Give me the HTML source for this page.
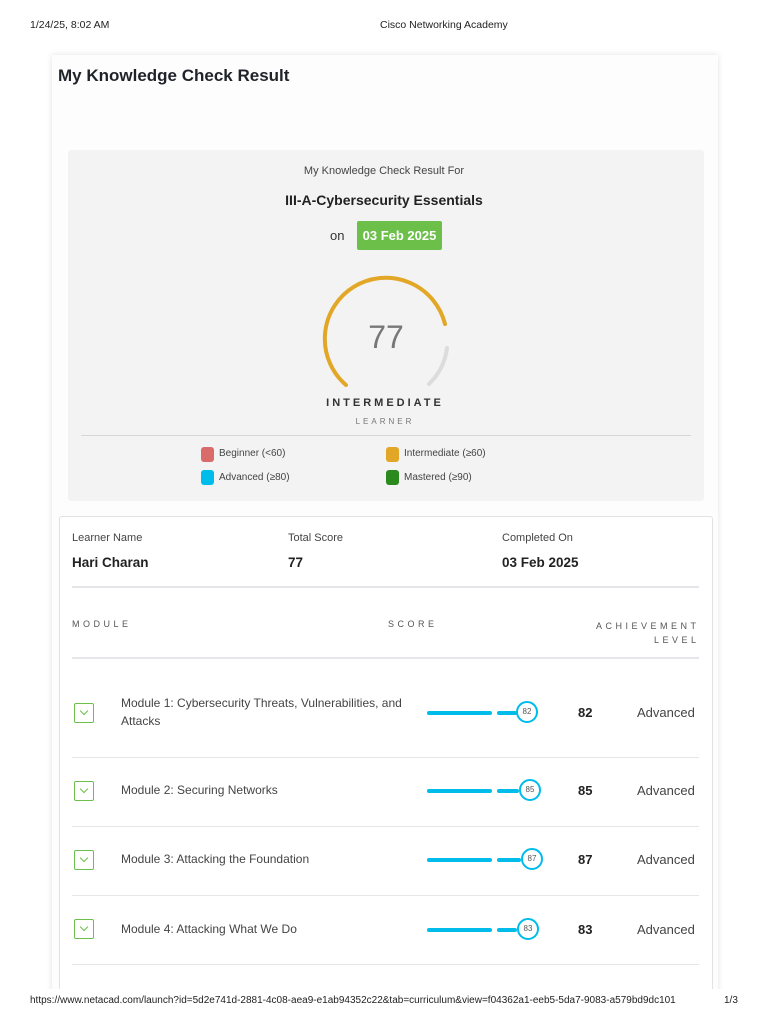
<!DOCTYPE html>
<html><head><style>
*{margin:0;padding:0;box-sizing:border-box}
body{width:768px;height:1024px;background:#fff;font-family:"Liberation Sans",sans-serif;position:relative;overflow:hidden;color:#222}
.a{position:absolute;white-space:nowrap}
.chk{position:absolute;left:74px;width:20px;height:20px;border:1.5px solid #6cc04a;border-radius:2px}
.chk:after{content:"";position:absolute;left:6px;top:4px;width:5px;height:5px;border-right:1.5px solid #6cc04a;border-bottom:1.5px solid #6cc04a;transform:rotate(45deg)}
.mt{font-size:12px;color:#444;line-height:18px}
.bar{position:absolute;height:4px;background:#00bceb;border-radius:2px}
.cir{position:absolute;width:22px;height:22px;border:2px solid #00bceb;border-radius:50%;font-size:8px;color:#555;text-align:center;line-height:18px;background:#fff}
.sc{font-size:13px;font-weight:bold;color:#222}
.lv{font-size:13px;color:#444}
.sep{position:absolute;left:72px;width:627px;height:1px;background:#e4e6ea}
</style></head><body>
<div class="a" style="left:30px;top:19px;font-size:10.5px">1/24/25, 8:02 AM</div>
<div class="a" style="left:380px;top:19px;font-size:10.5px">Cisco Networking Academy</div>

<div style="position:absolute;left:52px;top:55px;width:666px;height:940px;background:#fdfdfd;box-shadow:0 0 6px rgba(0,0,0,.12)"></div>
<div class="a" style="left:58px;top:66px;font-size:17px;font-weight:bold;color:#1f2329">My Knowledge Check Result</div>

<div style="position:absolute;left:68px;top:150px;width:636px;height:351px;background:#f3f3f3;border-radius:3px"></div>
<div class="a" style="left:0;width:768px;text-align:center;top:165px;font-size:11px;color:#444">My Knowledge Check Result For</div>
<div class="a" style="left:0;width:768px;text-align:center;top:192px;font-size:14px;font-weight:bold;color:#222">III-A-Cybersecurity Essentials</div>
<div class="a" style="left:330px;top:228px;font-size:13px;color:#333">on</div>
<div class="a" style="left:357px;top:221px;width:85px;height:29px;background:#6cc04a;border-radius:2px;color:#fff;font-size:13px;font-weight:bold;text-align:center;line-height:29px">03 Feb 2025</div>
<svg style="position:absolute;left:0;top:0" width="768" height="1024">
<path d="M346 385 A61 61 0 1 1 445 324" fill="none" stroke="#e2a727" stroke-width="4" stroke-linecap="round"/>
<path d="M447 348 A61 61 0 0 1 429 384" fill="none" stroke="#dcdcdc" stroke-width="4" stroke-linecap="round"/>
</svg>
<div class="a" style="left:0;width:772px;text-align:center;top:319px;font-size:32px;color:#777">77</div>
<div class="a" style="left:0;width:770px;text-align:center;top:397px;font-size:11px;font-weight:bold;letter-spacing:3px;color:#333">INTERMEDIATE</div>
<div class="a" style="left:0;width:770px;text-align:center;top:417px;font-size:8px;letter-spacing:3px;color:#777">LEARNER</div>
<div style="position:absolute;left:81px;top:435px;width:610px;height:1px;background:#d6d6d6"></div>
<div style="position:absolute;left:201px;top:447px;width:13px;height:15px;border-radius:3px;background:#da6b6b"></div>
<div class="a" style="left:219px;top:448px;font-size:10px;color:#444">Beginner (&lt;60)</div>
<div style="position:absolute;left:386px;top:447px;width:13px;height:15px;border-radius:3px;background:#e2a727"></div>
<div class="a" style="left:404px;top:448px;font-size:10px;color:#444">Intermediate (≥60)</div>
<div style="position:absolute;left:201px;top:470px;width:13px;height:15px;border-radius:3px;background:#00bceb"></div>
<div class="a" style="left:219px;top:472px;font-size:10px;color:#444">Advanced (≥80)</div>
<div style="position:absolute;left:386px;top:470px;width:13px;height:15px;border-radius:3px;background:#2b8a1e"></div>
<div class="a" style="left:404px;top:472px;font-size:10px;color:#444">Mastered (≥90)</div>

<div style="position:absolute;left:59px;top:516px;width:654px;height:480px;background:#fff;border:1px solid #e2e2e2;border-radius:3px"></div>
<div class="a" style="left:72px;top:532px;font-size:11px;color:#444">Learner Name</div>
<div class="a" style="left:288px;top:532px;font-size:11px;color:#444">Total Score</div>
<div class="a" style="left:502px;top:532px;font-size:11px;color:#444">Completed On</div>
<div class="a" style="left:72px;top:555px;font-size:13.5px;font-weight:bold">Hari Charan</div>
<div class="a" style="left:288px;top:555px;font-size:13.5px;font-weight:bold">77</div>
<div class="a" style="left:502px;top:555px;font-size:13.5px;font-weight:bold">03 Feb 2025</div>
<div class="sep" style="top:586px;height:2px"></div>
<div class="a" style="left:72px;top:619px;font-size:9px;letter-spacing:3.5px;color:#555">MODULE</div>
<div class="a" style="left:388px;top:619px;font-size:9px;letter-spacing:3.5px;color:#555">SCORE</div>
<div class="a" style="left:596px;top:619px;font-size:9px;letter-spacing:3.5px;color:#555;text-align:right;line-height:14px">ACHIEVEMENT<br>LEVEL</div>
<div class="sep" style="top:657px;height:2px"></div>

<div class="chk" style="top:703px"></div>
<div class="a mt" style="left:121px;top:694px">Module 1: Cybersecurity Threats, Vulnerabilities, and<br>Attacks</div>
<div class="bar" style="left:427px;top:711px;width:65px"></div><div class="bar" style="left:497px;top:711px;width:20px"></div>
<div class="cir" style="left:516px;top:701px">82</div>
<div class="a sc" style="left:578px;top:705px">82</div><div class="a lv" style="left:637px;top:705px">Advanced</div>
<div class="sep" style="top:757px"></div>

<div class="chk" style="top:781px"></div>
<div class="a mt" style="left:121px;top:781px">Module 2: Securing Networks</div>
<div class="bar" style="left:427px;top:789px;width:65px"></div><div class="bar" style="left:497px;top:789px;width:22px"></div>
<div class="cir" style="left:519px;top:779px">85</div>
<div class="a sc" style="left:578px;top:783px">85</div><div class="a lv" style="left:637px;top:783px">Advanced</div>
<div class="sep" style="top:826px"></div>

<div class="chk" style="top:850px"></div>
<div class="a mt" style="left:121px;top:850px">Module 3: Attacking the Foundation</div>
<div class="bar" style="left:427px;top:858px;width:65px"></div><div class="bar" style="left:497px;top:858px;width:24px"></div>
<div class="cir" style="left:521px;top:848px">87</div>
<div class="a sc" style="left:578px;top:852px">87</div><div class="a lv" style="left:637px;top:852px">Advanced</div>
<div class="sep" style="top:895px"></div>

<div class="chk" style="top:919px"></div>
<div class="a mt" style="left:121px;top:920px">Module 4: Attacking What We Do</div>
<div class="bar" style="left:427px;top:928px;width:65px"></div><div class="bar" style="left:497px;top:928px;width:20px"></div>
<div class="cir" style="left:517px;top:918px">83</div>
<div class="a sc" style="left:578px;top:922px">83</div><div class="a lv" style="left:637px;top:922px">Advanced</div>
<div class="sep" style="top:964px"></div>

<div style="position:absolute;left:0;top:989px;width:768px;height:35px;background:#fff"></div>
<div class="a" style="left:30px;top:995px;font-size:10px">https://www.netacad.com/launch?id=5d2e741d-2881-4c08-aea9-e1ab94352c22&amp;tab=curriculum&amp;view=f04362a1-eeb5-5da7-9083-a579bd9dc101</div>
<div class="a" style="left:724px;top:995px;font-size:10px">1/3</div>
</body></html>
